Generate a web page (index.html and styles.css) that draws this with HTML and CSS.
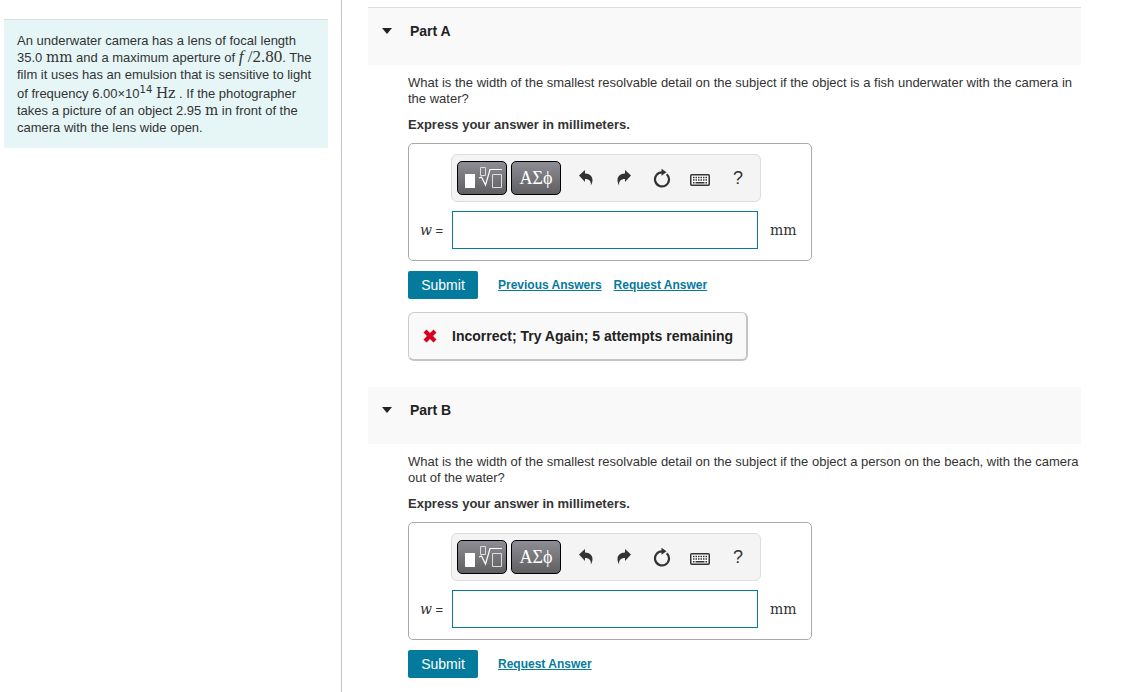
FILE: index.html
```html
<!DOCTYPE html>
<html lang="en">
<head>
    <meta charset="UTF-8">
    <meta name="viewport" content="width=device-width, initial-scale=1.0">
    <title>Underwater camera</title>
    <link rel="stylesheet" href="styles.css">
</head>
<body>

<!-- Shared icons -->
<svg class="sprite" aria-hidden="true">
    <symbol id="icon-templates" viewBox="0 0 38 22">
        <rect x="0" y="7" width="10" height="14" fill="#fff"/>
        <path d="M15.500 0.500h5v8h-5zM27.500 7.500h9v13h-9z" fill="none" stroke="#ddd"/>
        <path d="M14 11l2.500-1 4 8L25 2.500H37" fill="none" stroke="#fff" stroke-width="1.200"/>
    </symbol>
    <symbol id="icon-undo" viewBox="0 0 14 16">
        <path d="M0 5.500L6 0v3.500c5 .2 7.500 3 7.500 6.500 0 2-.7 4-1.700 5.500.6-4-1.300-6.500-5.800-6.500v3z" fill="#333"/>
    </symbol>
    <symbol id="icon-reset" viewBox="0 0 18 20">
        <path d="M13.700 6.200A7 7 0 1 1 9 4.400" fill="none" stroke="#333" stroke-width="2.200"/>
        <path d="M8.500 0.800l5 3.500-5 3.500z" fill="#333"/>
    </symbol>
    <symbol id="icon-keyboard" viewBox="0 0 20 12">
        <rect x="0.750" y="0.750" width="18.500" height="10.500" rx="1" fill="#fff" stroke="#333" stroke-width="1.500"/>
        <path d="M3 3.500h14M3 6h14" stroke="#333" stroke-width="1.500" stroke-dasharray="1.500 1"/>
        <path d="M3 8.700h1.500M5.500 8.700h9M15.500 8.700H17" stroke="#333" stroke-width="1.500"/>
    </symbol>
    <symbol id="icon-wrong" viewBox="0 0 14 14">
        <path d="M3.500 0.500L7 4 10.500 0.500 13.500 3.500 10 7l3.500 3.500-3 3L7 10l-3.500 3.500-3-3L4 7 0.500 3.500z" fill="#d9001f"/>
    </symbol>
</svg>

<div class="page">
    <aside class="sidebar">
        <p class="problem">An underwater camera has a lens of focal length 35.0 <span class="math">mm</span> and a maximum aperture of <span class="formula"><i>f</i> /2.80</span>. The film it uses has an emulsion that is sensitive to light of frequency 6.00×10<sup>14</sup> <span class="math">Hz</span> . If the photographer takes a picture of an object 2.95 <span class="math">m</span> in front of the camera with the lens wide open.</p>
    </aside>

    <main class="content">
        <section class="part">
            <h2 class="part-header first"><button class="toggle" type="button" aria-expanded="true"><span class="arrow"></span>Part A</button></h2>
            <form class="part-body">
                <p class="question">What is the width of the smallest resolvable detail on the subject if the object is a fish underwater with the camera in the water?</p>
                <p class="instructions">Express your answer in millimeters.</p>
                <div class="answer-box">
                    <div class="toolbar">
                        <button class="palette templates" type="button" aria-label="Templates"><svg width="38" height="22"><use href="#icon-templates"/></svg></button>
                        <button class="palette" type="button">ΑΣϕ</button>
                        <button class="tool" type="button" aria-label="Undo"><svg width="14" height="16"><use href="#icon-undo"/></svg></button>
                        <button class="tool" type="button" aria-label="Redo"><svg class="flip" width="14" height="16"><use href="#icon-undo"/></svg></button>
                        <button class="tool" type="button" aria-label="Reset"><svg width="18" height="20"><use href="#icon-reset"/></svg></button>
                        <button class="tool keyboard" type="button" aria-label="Keyboard shortcuts"><svg width="20" height="12"><use href="#icon-keyboard"/></svg></button>
                        <button class="tool" type="button">?</button>
                    </div>
                    <div class="entry">
                        <label for="answerA"><i class="math">w</i> =</label>
                        <input type="text" id="answerA">
                        <span class="unit math">mm</span>
                    </div>
                </div>
                <div class="actions">
                    <button class="submit-btn" type="button">Submit</button>
                    <a href="#previous">Previous Answers</a>
                    <a href="#request">Request Answer</a>
                </div>
                <div class="feedback">
                    <svg width="14" height="14"><use href="#icon-wrong"/></svg>
                    <span>Incorrect; Try Again; 5 attempts remaining</span>
                </div>
            </form>
        </section>

        <section class="part">
            <h2 class="part-header"><button class="toggle" type="button" aria-expanded="true"><span class="arrow"></span>Part B</button></h2>
            <form class="part-body">
                <p class="question">What is the width of the smallest resolvable detail on the subject if the object a person on the beach, with the camera out of the water?</p>
                <p class="instructions">Express your answer in millimeters.</p>
                <div class="answer-box">
                    <div class="toolbar">
                        <button class="palette templates" type="button" aria-label="Templates"><svg width="38" height="22"><use href="#icon-templates"/></svg></button>
                        <button class="palette" type="button">ΑΣϕ</button>
                        <button class="tool" type="button" aria-label="Undo"><svg width="14" height="16"><use href="#icon-undo"/></svg></button>
                        <button class="tool" type="button" aria-label="Redo"><svg class="flip" width="14" height="16"><use href="#icon-undo"/></svg></button>
                        <button class="tool" type="button" aria-label="Reset"><svg width="18" height="20"><use href="#icon-reset"/></svg></button>
                        <button class="tool keyboard" type="button" aria-label="Keyboard shortcuts"><svg width="20" height="12"><use href="#icon-keyboard"/></svg></button>
                        <button class="tool" type="button">?</button>
                    </div>
                    <div class="entry">
                        <label for="answerB"><i class="math">w</i> =</label>
                        <input type="text" id="answerB">
                        <span class="unit math">mm</span>
                    </div>
                </div>
                <div class="actions">
                    <button class="submit-btn" type="button">Submit</button>
                    <a href="#request">Request Answer</a>
                </div>
            </form>
        </section>
    </main>
</div>

</body>
</html>
```
FILE: styles.css
```css
* {
    box-sizing: border-box;
}
body {
    font-family: "Liberation Sans", Arial, sans-serif;
    font-size: 13px;
    line-height: 16px;
    color: #333;
    background-color: #fff;
    margin: 0;
}
p, h2 {
    margin: 0;
}
button {
    font-family: inherit;
    cursor: pointer;
}
svg {
    display: block;
}
.sprite {
    display: none;
}
.page {
    display: flex;
    min-height: 100vh;
}
.sidebar {
    flex: 0 0 342px;
    padding: 19px 13px 0 4px;
    border-right: 1px solid #bcc5d6;
}
.problem {
    padding: 12px 13px;
    line-height: 17px;
    background-color: #e6f6f7;
    border-top: 1px solid #ddd;
}
.math {
    font-family: "DejaVu Serif", serif;
    font-size: 14px;
    line-height: 16px;
}
.formula {
    font-family: "Liberation Serif", serif;
    font-size: 17px;
    line-height: 16px;
}
sup {
    font-family: "DejaVu Sans", sans-serif;
    font-size: 10px;
    line-height: 14px;
}
.content {
    flex: 1;
    min-width: 0;
    padding: 7px 43px 0 26px;
}
.part {
    margin-bottom: 26px;
}
.part:last-child {
    margin-bottom: 14px;
}
.part-header {
    height: 57px;
    padding: 15px 14px;
    background-color: #f9f9f9;
}
.part-header.first {
    height: 58px;
    border-top: 1px solid #ddd;
}
.toggle {
    display: flex;
    align-items: center;
    gap: 18px;
    padding: 0;
    border: none;
    background: none;
    font-size: 14px;
    font-weight: bold;
    line-height: 16px;
    color: #222;
}
.arrow {
    border: 5px solid transparent;
    border-top: 6px solid #222;
    border-bottom: none;
}
.part-body {
    padding: 10px 0 0 40px;
}
.instructions {
    margin-top: 10px;
    font-weight: bold;
}
.answer-box {
    width: 404px;
    max-width: 100%;
    margin-top: 10px;
    padding: 10px 11px 11px;
    border: 1px solid #aaa;
    border-radius: 5px;
}
.toolbar {
    display: flex;
    align-items: center;
    width: 310px;
    height: 48px;
    margin-left: 31px;
    padding-left: 5px;
    background-color: #f4f4f4;
    border: 1px solid #ddd;
    border-radius: 6px;
}
.palette {
    display: flex;
    align-items: center;
    justify-content: center;
    width: 50px;
    height: 34px;
    margin-right: 4px;
    padding: 0;
    color: #fff;
    font-family: "Liberation Serif", serif;
    font-size: 18px;
    background: linear-gradient(#8e8d95, #5f5f61);
    border: 1px solid #000;
    border-radius: 5px;
}
.templates {
    padding-left: 4px;
}
.palette + .tool {
    margin-left: 2px;
}
.tool {
    display: flex;
    align-items: center;
    justify-content: center;
    flex: 0 1 38px;
    height: 34px;
    padding: 0;
    border: none;
    background: none;
    font-size: 18px;
    color: #333;
}
.keyboard {
    padding-top: 4px;
}
.flip {
    transform: scaleX(-1);
}
.entry {
    display: flex;
    align-items: center;
    margin-top: 9px;
}
.entry label {
    flex: 0 0 32px;
    white-space: nowrap;
}
.entry input {
    width: 306px;
    min-width: 0;
    height: 38px;
    padding: 0 8px;
    border: 1px solid #047b9d;
    font-size: 16px;
}
.unit {
    margin-left: 12px;
}
.actions {
    display: flex;
    align-items: center;
    gap: 12px;
    margin-top: 10px;
    font-size: 12px;
    font-weight: bold;
}
.actions a {
    color: #047b9d;
}
.submit-btn {
    width: 70px;
    height: 28px;
    margin-right: 8px;
    padding: 0;
    color: #fff;
    font-size: 14px;
    background-color: #047b9d;
    border: none;
    border-radius: 2px;
}
.feedback {
    display: flex;
    align-items: center;
    gap: 15px;
    width: fit-content;
    height: 49px;
    margin-top: 13px;
    padding: 0 13px 0 14px;
    color: #222;
    font-size: 14px;
    font-weight: bold;
    background-color: #f9f9f9;
    border: 1px solid #ccc;
    border-right: 2px solid #c4c4c4;
    border-bottom: 2px solid #c4c4c4;
    border-radius: 6px;
}
```
